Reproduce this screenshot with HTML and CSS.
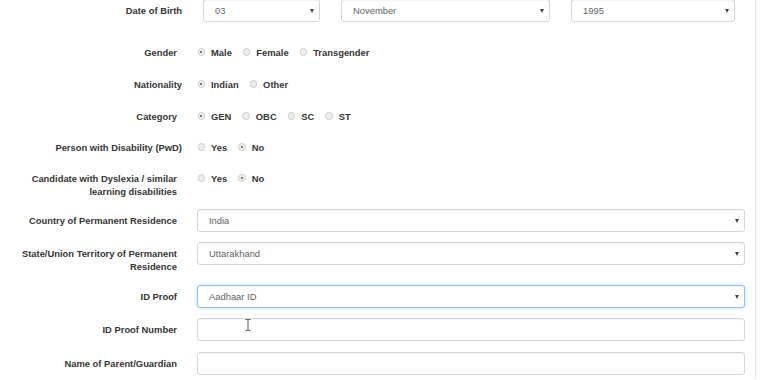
FILE: index.html
```html
<!DOCTYPE html>
<html>
<head>
<meta charset="utf-8">
<link rel="stylesheet" href="styles.css">
</head>
<body>
<div class="panel">
  <div class="row r-dob">
    <div class="label wide">Date of Birth</div>
    <div class="control dob">
      <div class="select s-day"><span>03</span><i class="caret"></i></div>
      <div class="select s-month"><span>November</span><i class="caret"></i></div>
      <div class="select s-year"><span>1995</span><i class="caret"></i></div>
    </div>
  </div>

  <div class="row r-first">
    <div class="label">Gender</div>
    <div class="control radios">
      <span class="opt"><i class="radio on"></i>Male</span>
      <span class="opt"><i class="radio"></i>Female</span>
      <span class="opt"><i class="radio"></i>Transgender</span>
    </div>
  </div>

  <div class="row r-radio">
    <div class="label wide">Nationality</div>
    <div class="control radios">
      <span class="opt"><i class="radio on"></i>Indian</span>
      <span class="opt"><i class="radio"></i>Other</span>
    </div>
  </div>

  <div class="row r-radio">
    <div class="label">Category</div>
    <div class="control radios">
      <span class="opt"><i class="radio on"></i>GEN</span>
      <span class="opt"><i class="radio"></i>OBC</span>
      <span class="opt"><i class="radio"></i>SC</span>
      <span class="opt"><i class="radio"></i>ST</span>
    </div>
  </div>

  <div class="row r-radio2">
    <div class="label wide">Person with Disability (PwD)</div>
    <div class="control radios">
      <span class="opt"><i class="radio"></i>Yes</span>
      <span class="opt"><i class="radio on"></i>No</span>
    </div>
  </div>

  <div class="row r-radio2">
    <div class="label">Candidate with Dyslexia / similar<br>learning disabilities</div>
    <div class="control radios">
      <span class="opt"><i class="radio"></i>Yes</span>
      <span class="opt"><i class="radio on"></i>No</span>
    </div>
  </div>

  <div class="row r-input r-country">
    <div class="label">Country of Permanent Residence</div>
    <div class="control"><div class="select full"><span>India</span><i class="caret"></i></div></div>
  </div>

  <div class="row r-input r-state">
    <div class="label">State/Union Territory of Permanent<br>Residence</div>
    <div class="control"><div class="select full"><span>Uttarakhand</span><i class="caret"></i></div></div>
  </div>

  <div class="row r-input r-id">
    <div class="label">ID Proof</div>
    <div class="control"><div class="select full focus"><span>Aadhaar ID</span><i class="caret"></i></div></div>
  </div>

  <div class="row r-input r-num">
    <div class="label">ID Proof Number</div>
    <div class="control cursor-host"><div class="input full"></div>
      <svg class="ibeam" width="6" height="12" viewBox="0 0 6 12"><path d="M0.5 0.5h2l0.5 0.6 0.5-0.6h2M3 1v10M0.5 11.5h2l0.5-0.6 0.5 0.6h2" fill="none" stroke="#444" stroke-width="0.9"/></svg>
    </div>
  </div>

  <div class="row r-input r-name">
    <div class="label">Name of Parent/Guardian</div>
    <div class="control"><div class="input full"></div></div>
  </div>
</div>
</body>
</html>
```

FILE: styles.css
```css
html, body {
  margin: 0;
  padding: 0;
  background: #ffffff;
}
body {
  font-family: "Liberation Sans", Arial, sans-serif;
  font-size: 9.4px;
  color: #353535;
  width: 768px;
  height: 380px;
  overflow: hidden;
}
.panel {
  width: 756px;
  height: 380px;
  border-right: 1px solid #e6e6e6;
  box-sizing: border-box;
  margin-top: -1px;
}
.row {
  display: flex;
  align-items: flex-start;
}
.label {
  flex: 0 0 auto;
  width: 177px;
  margin-right: 20px;
  text-align: right;
  font-weight: bold;
  line-height: 13px;
  white-space: nowrap;
}
.label.wide {
  width: 182px;
  margin-right: 15px;
}
.r-dob .label, .r-input .label {
  padding-top: 5px;
}
.r-first { margin-top: 23.5px; }
.r-radio { margin-top: 19px; }
.r-radio2 { margin-top: 18px; }
.r-country { margin-top: 11.5px; }
.r-state { margin-top: 10px; }
.r-id { margin-top: 12px; }
.r-num { margin-top: 10px; }
.r-name { margin-top: 11px; }

.control {
  flex: 0 0 auto;
}
.dob {
  display: flex;
  gap: 21px;
  padding-left: 6px;
}
.select, .input {
  position: relative;
  height: 23px;
  box-sizing: border-box;
  border: 1px solid #d6d6d6;
  border-radius: 3px;
  background: #fff;
  box-shadow: inset 0 1px 1px rgba(0,0,0,0.05);
  color: #636363;
  line-height: 21px;
  padding-left: 11px;
}
.select span {
  display: block;
}
.s-day { width: 117px; }
.s-month { width: 209px; }
.s-year { width: 164px; }
.full { width: 548px; }
.focus {
  border-color: #8ec2e6;
  box-shadow: inset 0 1px 1px rgba(0,0,0,0.05), 0 0 4px rgba(102,175,233,0.45);
}
.caret {
  position: absolute;
  right: 5px;
  top: 9px;
  width: 0;
  height: 0;
  border-left: 2.5px solid transparent;
  border-right: 2.5px solid transparent;
  border-top: 4px solid #444;
}
.radios {
  display: flex;
  align-items: center;
  height: 13px;
  font-weight: bold;
}
.opt {
  display: inline-flex;
  align-items: center;
  margin-right: 10.5px;
  line-height: 13px;
}
.radio {
  display: inline-block;
  position: relative;
  width: 7.5px;
  height: 7.5px;
  box-sizing: border-box;
  border: 1px solid #cdcdcd;
  border-radius: 50%;
  background: #ededed;
  margin-left: 0.5px;
  margin-right: 6px;
}
.radio.on::after {
  content: "";
  position: absolute;
  left: 1.75px;
  top: 1.75px;
  width: 2px;
  height: 2px;
  border-radius: 50%;
  background: #555;
}
.cursor-host {
  position: relative;
}
.ibeam {
  position: absolute;
  left: 48px;
  top: 1px;
}
```
